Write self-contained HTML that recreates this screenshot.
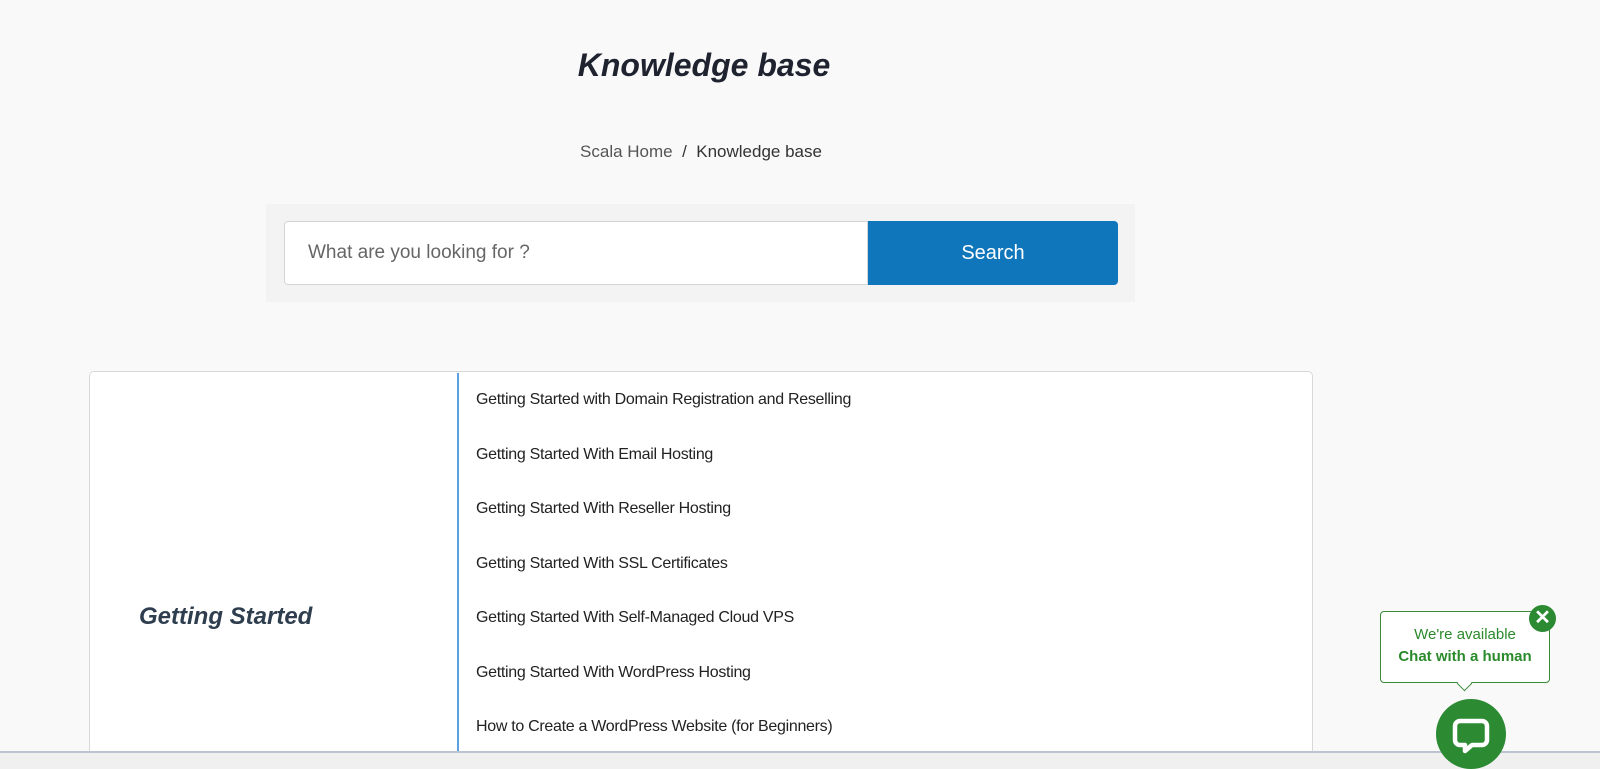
<!DOCTYPE html>
<html><head><style>
html,body{margin:0;width:1600px;height:769px;overflow:hidden}
body{background:#f9f9f9;font-family:"Liberation Sans",sans-serif;position:relative}
h1{position:absolute;left:0;width:1408px;top:47px;margin:0;text-align:center;font-size:32px;font-style:italic;font-weight:bold;color:#1f2330}
.bc{position:absolute;top:142px;left:0;width:1402px;text-align:center;font-size:17px;color:#333}
.bc span{color:#555}
.sw{position:absolute;left:266px;top:204px;width:869px;height:98px;background:#f3f3f3}
.in{position:absolute;left:284px;top:221px;width:584px;height:64px;background:#fff;border:1px solid #d4d4d4;border-radius:4px 0 0 4px;box-sizing:border-box;padding-left:23px;line-height:62px;font-size:19px;color:#666}
.btn{position:absolute;left:868px;top:221px;width:250px;height:64px;background:#0f76bb;border-radius:0 4px 4px 0;color:#fff;font-size:20px;text-align:center;line-height:64px}
.card{position:absolute;left:89px;top:371px;width:1224px;height:398px;background:#fff;border:1px solid #d8d8d8;border-bottom:none;border-radius:5px 5px 0 0;box-sizing:border-box}
.cat{position:absolute;left:139px;top:603px;font-size:24px;font-style:italic;font-weight:bold;color:#2e3e4e}
.vl{position:absolute;left:457px;top:373px;width:2px;height:396px;background:#5aa1e6}
.l{position:absolute;left:476px;font-size:16px;color:#222;letter-spacing:-0.3px}
.bot{position:absolute;left:0;top:751px;width:1600px;height:18px;background:#f0f0f0;border-top:2px solid #b9c6d2}
.tip{position:absolute;left:1380px;top:611px;width:170px;height:72px;background:#fff;border:1px solid #3a8a3a;border-radius:4px;box-sizing:border-box;text-align:center;color:#2b8a2b;font-size:15px}
.x{position:absolute;left:1529px;top:605px;width:27px;height:27px;border-radius:50%;background:#2b8a32;color:#fff;font-size:20px;font-weight:bold;text-align:center;line-height:27px}
.fab{position:absolute;left:1436px;top:699px;width:70px;height:70px;border-radius:50%;background:#2b8a32}
</style></head><body>
<h1>Knowledge base</h1>
<div class="bc"><span>Scala Home</span> &nbsp;/&nbsp; Knowledge base</div>
<div class="sw"></div>
<div class="in">What are you looking for ?</div>
<div class="btn">Search</div>
<div class="card"></div>
<div class="vl"></div>
<div class="cat">Getting Started</div>
<div class="l" style="top:391px">Getting Started with Domain Registration and Reselling</div>
<div class="l" style="top:446px">Getting Started With Email Hosting</div>
<div class="l" style="top:500px">Getting Started With Reseller Hosting</div>
<div class="l" style="top:555px">Getting Started With SSL Certificates</div>
<div class="l" style="top:609px">Getting Started With Self-Managed Cloud VPS</div>
<div class="l" style="top:664px">Getting Started With WordPress Hosting</div>
<div class="l" style="top:718px">How to Create a WordPress Website (for Beginners)</div>
<div class="bot"></div>
<div class="tip"><div style="margin-top:14px">We're available</div><div style="font-weight:bold;margin-top:5px">Chat with a human</div></div>
<div style="position:absolute;left:1459px;top:678px;width:10px;height:10px;background:#fff;border-right:1px solid #3a8a3a;border-bottom:1px solid #3a8a3a;transform:rotate(45deg)"></div>
<div class="x">✕</div>
<div class="fab"><svg width="70" height="70" viewBox="0 0 70 70"><path d="M24 22h22a5 5 0 0 1 5 5v14a5 5 0 0 1-5 5H36l-7 6v-6h-5a5 5 0 0 1-5-5V27a5 5 0 0 1 5-5z" fill="none" stroke="#fff" stroke-width="4.5" stroke-linejoin="round"/></svg></div>
</body></html>
